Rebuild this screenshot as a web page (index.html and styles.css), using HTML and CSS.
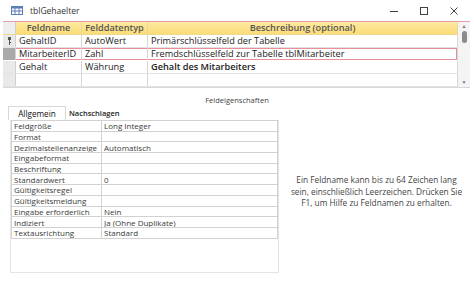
FILE: index.html
```html
<!DOCTYPE html>
<html lang="de">
<head>
    <meta charset="UTF-8">
    <title>tblGehaelter</title>
    <link rel="stylesheet" href="styles.css">
</head>
<body>
    <div class="window">
        <div class="titlebar">
            <svg class="app-icon" width="12" height="9" viewBox="0 0 12 9">
                <rect x="0.5" y="0.5" width="11" height="8" fill="#fff" stroke="#5b7fb5"/>
                <rect x="0.5" y="0.5" width="11" height="2" fill="#5b7fb5"/>
                <line x1="4" y1="2" x2="4" y2="9" stroke="#5b7fb5"/>
                <line x1="8" y1="2" x2="8" y2="9" stroke="#5b7fb5"/>
                <line x1="0" y1="5" x2="12" y2="5" stroke="#5b7fb5"/>
            </svg>
            <span class="title">tblGehaelter</span>
            <div class="controls">
                <svg width="8" height="8" viewBox="0 0 8 8"><line x1="0" y1="4.5" x2="8" y2="4.5" stroke="#444"/></svg>
                <svg width="8" height="8" viewBox="0 0 8 8"><rect x="0.5" y="0.5" width="7" height="7" fill="none" stroke="#444"/></svg>
                <svg width="8" height="8" viewBox="0 0 8 8"><path d="M0.5 0.5 L7.5 7.5 M7.5 0.5 L0.5 7.5" stroke="#444"/></svg>
            </div>
        </div>

        <div class="grid">
            <div class="fields">
                <div class="row head">
                    <div class="cell sel"></div>
                    <div class="cell">Feldname</div>
                    <div class="cell">Felddatentyp</div>
                    <div class="cell">Beschreibung (optional)</div>
                </div>
                <div class="row">
                    <div class="cell sel">
                        <svg width="5" height="8" viewBox="0 0 5 8"><rect x="1" y="0" width="3" height="3" fill="#555"/><rect x="2" y="3" width="1" height="5" fill="#555"/><rect x="3" y="5" width="1" height="1" fill="#555"/></svg>
                    </div>
                    <div class="cell">GehaltID</div>
                    <div class="cell">AutoWert</div>
                    <div class="cell">Primärschlüsselfeld der Tabelle</div>
                </div>
                <div class="row active">
                    <div class="cell sel"></div>
                    <div class="cell">MitarbeiterID</div>
                    <div class="cell">Zahl</div>
                    <div class="cell">Fremdschlüsselfeld zur Tabelle tblMitarbeiter</div>
                </div>
                <div class="row">
                    <div class="cell sel"></div>
                    <div class="cell">Gehalt</div>
                    <div class="cell">Währung</div>
                    <div class="cell strong">Gehalt des Mitarbeiters</div>
                </div>
                <div class="row">
                    <div class="cell sel"></div>
                    <div class="cell"></div>
                    <div class="cell"></div>
                    <div class="cell"></div>
                </div>
            </div>
            <div class="scrollbar">
                <span class="arrow">▲</span>
                <span class="thumb"></span>
                <span class="arrow down">▼</span>
            </div>
        </div>

        <div class="caption">Feldeigenschaften</div>

        <div class="props">
            <div class="props-left">
                <div class="tabs">
                    <span class="tab on">Allgemein</span>
                    <span class="tab">Nachschlagen</span>
                </div>
                <div class="panel">
                    <table class="settings">
                        <tr><td>Feldgröße</td><td>Long Integer</td></tr>
                        <tr><td>Format</td><td></td></tr>
                        <tr><td>Dezimalstellenanzeige</td><td>Automatisch</td></tr>
                        <tr><td>Eingabeformat</td><td></td></tr>
                        <tr><td>Beschriftung</td><td></td></tr>
                        <tr><td>Standardwert</td><td>0</td></tr>
                        <tr><td>Gültigkeitsregel</td><td></td></tr>
                        <tr><td>Gültigkeitsmeldung</td><td></td></tr>
                        <tr><td>Eingabe erforderlich</td><td>Nein</td></tr>
                        <tr><td>Indiziert</td><td>Ja (Ohne Duplikate)</td></tr>
                        <tr><td>Textausrichtung</td><td>Standard</td></tr>
                    </table>
                </div>
            </div>
            <div class="help">
                Ein Feldname kann bis zu 64 Zeichen lang<br>
                sein, einschließlich Leerzeichen. Drücken Sie<br>
                F1, um Hilfe zu Feldnamen zu erhalten.
            </div>
        </div>
    </div>
</body>
</html>
```

FILE: styles.css
```css
body {
    margin: 0;
    background-color: #ffffff;
    font-family: "Open Sans", "Noto Sans", sans-serif;
    color: #222222;
}

.window {
    width: 474px;
    height: 281px;
    overflow: hidden;
}

.titlebar {
    height: 21px;
    display: flex;
    align-items: center;
    padding-left: 11px;
}

.app-icon {
    margin-right: 7px;
}

.title {
    font-size: 8.5px;
    color: #333333;
}

.controls {
    margin-left: auto;
    display: flex;
    gap: 22px;
    padding-right: 16px;
}

/* field list */
.grid {
    display: flex;
    margin: 0 4px 0 3px;
    border-top: 1px solid #e8a0a8;
    border-bottom: 1px solid #d8d8d8;
}

.fields {
    flex: 1;
    font-size: 9.2px;
}

.row {
    display: grid;
    grid-template-columns: 13px 66px 66px 1fr;
    height: 13px;
    box-sizing: border-box;
    border-bottom: 1px solid #e2e2e2;
}

.cell {
    padding-left: 3px;
    line-height: 12px;
    border-right: 1px solid #d6d6d6;
    white-space: nowrap;
    overflow: hidden;
}

.cell.sel {
    padding: 0;
    background-color: #e9e9e9;
    border-right-color: #d0d0d0;
    display: flex;
    align-items: center;
    justify-content: center;
}

.cell.strong {
    font-weight: 600;
}

.row.head {
    border-bottom-color: #efd890;
}

.row.head .cell {
    background: linear-gradient(#fdeaa2, #fbdc78);
    color: #555555;
    font-weight: 600;
    text-align: center;
    padding-left: 0;
    border-right-color: #e8d8a0;
}

.row.head .cell.sel {
    background: #eeeeee;
    border-right-color: #d0d0d0;
}

.row.active {
    border-bottom-color: transparent;
}

.row.active .cell {
    box-shadow: inset 0 1px #e8909a, inset 0 -1px #e8909a;
}

.row.active .cell:last-child {
    box-shadow: inset 0 1px #e8909a, inset 0 -1px #e8909a, inset -1px 0 #e8909a;
}

.row.active .cell.sel {
    background-color: #a9a9a9;
    box-shadow: none;
}

.scrollbar {
    width: 12px;
    display: flex;
    flex-direction: column;
    align-items: center;
    background-color: #f4f4f4;
}

.arrow {
    font-size: 5px;
    color: #777777;
    line-height: 9px;
}

.arrow.down {
    margin-top: auto;
}

.thumb {
    width: 5px;
    height: 12px;
    border-radius: 3px;
    background-color: #8a8a8a;
}

.caption {
    text-align: center;
    font-size: 7.5px;
    color: #444444;
    margin-top: 7px;
    height: 11px;
}

/* field properties */
.props {
    display: flex;
    padding-left: 8px;
}

.props-left {
    width: 271px;
}

.tabs {
    display: flex;
    height: 14px;
    align-items: flex-end;
    font-size: 7.5px;
}

.tab {
    padding: 0 3px;
    line-height: 13px;
    color: #222222;
    font-weight: 600;
}

.tab.on {
    width: 50px;
    text-align: center;
    border: 1px solid #d8d8d8;
    border-bottom: none;
    font-size: 8.2px;
    font-weight: 400;
    color: #111111;
}

.panel {
    height: 152px;
    margin-left: 2px;
    border: 1px solid #e4e4e4;
    border-top: none;
}

.settings {
    width: 100%;
    border-collapse: collapse;
    table-layout: fixed;
    font-size: 8px;
    color: #3a3a3a;
}

.settings td {
    height: 9.7px;
    padding: 0 0 0 2px;
    border: 1px solid #d2d2d2;
    line-height: 9px;
    white-space: nowrap;
    overflow: hidden;
}

.settings td:first-child {
    width: 87px;
}

.help {
    flex: 1;
    display: flex;
    align-items: center;
    justify-content: center;
    text-align: center;
    font-size: 8.3px;
    line-height: 11.5px;
    color: #444444;
    padding-top: 4px;
}
```
